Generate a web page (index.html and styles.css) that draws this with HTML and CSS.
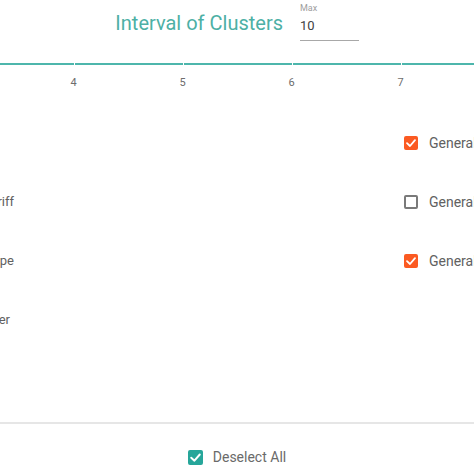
FILE: index.html
```html
<!DOCTYPE html>
<html lang="en">
<head>
    <meta charset="UTF-8">
    <meta name="viewport" content="width=device-width, initial-scale=1.0">
    <title>Interval of Clusters</title>
    <link rel="stylesheet" href="styles.css">
</head>
<body>

<div class="header">
    <h1 class="title">Interval of Clusters</h1>
    <div class="field">
        <label class="field-label">Max</label>
        <div class="field-value">10</div>
    </div>
</div>

<div class="axis">
    <div class="axis-line">
        <span></span><span></span><span></span><span></span><span></span>
    </div>
    <div class="axis-labels">
        <span>4</span><span>5</span><span>6</span><span>7</span>
    </div>
</div>

<div class="rows">
    <div class="row">
        <div class="name"></div>
        <div class="check-item">
            <span class="box checked orange">
                <svg viewBox="0 0 14 14"><polyline points="3,7.2 6,10 11,4.2"/></svg>
            </span>
            <span class="check-text">General Store</span>
        </div>
    </div>
    <div class="row">
        <div class="name"><span>Sheriff</span></div>
        <div class="check-item">
            <span class="box"></span>
            <span class="check-text">General Store</span>
        </div>
    </div>
    <div class="row">
        <div class="name"><span>Type</span></div>
        <div class="check-item">
            <span class="box checked orange">
                <svg viewBox="0 0 14 14"><polyline points="3,7.2 6,10 11,4.2"/></svg>
            </span>
            <span class="check-text">General Store</span>
        </div>
    </div>
    <div class="row">
        <div class="name short"><span>Miner</span></div>
        <div></div>
    </div>
</div>

<div class="footer">
    <span class="box checked teal">
        <svg viewBox="0 0 14 14"><polyline points="3,7.2 6,10 11,4.2"/></svg>
    </span>
    <span class="footer-text">Deselect All</span>
</div>

</body>
</html>
```

FILE: styles.css
```css
html, body {
    margin: 0;
    padding: 0;
    background-color: #fff;
    overflow: hidden;
}
body {
    font-family: Roboto, "Liberation Sans", Arial, sans-serif;
    color: #616161;
    width: 474px;
    height: 474px;
}
.header {
    display: grid;
    grid-template-columns: 300px 59px;
    align-items: start;
    height: 63px;
}
.title {
    margin: 11px 17px 0 0;
    font-size: 20px;
    font-weight: 400;
    line-height: 24px;
    color: #4db0a5;
    text-align: right;
    white-space: nowrap;
}
.field {
    padding-top: 3px;
}
.field-label {
    display: block;
    font-size: 9px;
    line-height: 11px;
    color: #9e9e9e;
}
.field-value {
    margin-top: 2px;
    font-size: 13px;
    line-height: 20px;
    color: #424242;
    padding-bottom: 4px;
    border-bottom: 1px solid #a8a8a8;
}
.axis-line {
    display: grid;
    grid-template-columns: 74px repeat(4, 108px) 1fr;
    column-gap: 1px;
    height: 2px;
}
.axis-line span {
    background-color: #4db6ac;
}
.axis-labels {
    display: flex;
    padding-left: 19px;
    height: 36px;
    line-height: 36px;
    font-size: 11px;
    color: #6d6d6d;
}
.axis-labels span {
    width: 109px;
    text-align: center;
}
.rows {
    margin-top: 12px;
    height: 309px;
}
.row {
    display: grid;
    grid-template-columns: 14px 1fr 70px;
    height: 59px;
    align-items: center;
    font-size: 13px;
}
.name {
    display: flex;
    justify-content: flex-end;
    white-space: nowrap;
}
.name.short {
    padding-right: 4px;
}
.row > :last-child {
    grid-column: 3;
}
.check-item {
    display: flex;
    align-items: center;
    gap: 11px;
    white-space: nowrap;
    font-size: 14px;
}
.box {
    display: inline-flex;
    box-sizing: border-box;
    width: 14px;
    height: 14px;
    border: 2px solid #7a7a7a;
    border-radius: 2px;
    flex-shrink: 0;
}
.box svg {
    width: 14px;
    height: 14px;
    margin: -2px;
}
.box polyline {
    fill: none;
    stroke: #fff;
    stroke-width: 1.8;
    stroke-linecap: round;
    stroke-linejoin: round;
}
.box.orange {
    background-color: #fb5a22;
    border-color: #fb5a22;
}
.box.teal {
    background-color: #26a69a;
    border-color: #26a69a;
    width: 15px;
    height: 15px;
}
.box.teal svg {
    width: 15px;
    height: 15px;
}
.footer {
    border-top: 2px solid #e6e6e6;
    height: 66px;
    display: flex;
    align-items: center;
    justify-content: center;
    gap: 10px;
}
.footer-text {
    font-size: 14px;
    color: #6a6a6a;
}
```
